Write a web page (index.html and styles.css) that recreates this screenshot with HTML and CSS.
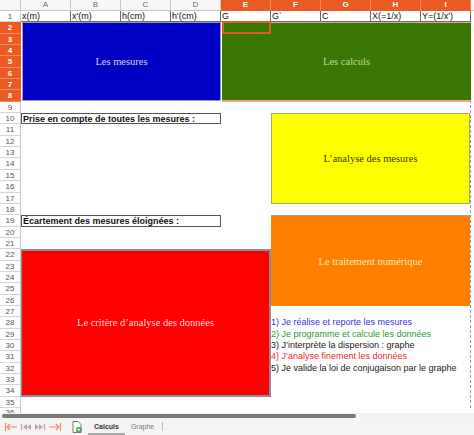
FILE: index.html
```html
<!DOCTYPE html>
<html lang="fr">
<head>
<meta charset="utf-8">
<link rel="stylesheet" href="styles.css">
</head>
<body>
<div class="app">
  <div class="sheet">
    <div class="grid">
      <div class="corner"></div>
      <div class="ch">A</div><div class="ch">B</div><div class="ch">C</div><div class="ch">D</div>
      <div class="ch sel">E</div><div class="ch sel">F</div><div class="ch sel">G</div><div class="ch sel">H</div><div class="ch sel">I</div>
      <div class="ch rest"></div>

      <div class="rh" style="grid-row:2">1</div>
      <div class="rh sel" style="grid-row:3">2</div>
      <div class="rh sel" style="grid-row:4">3</div>
      <div class="rh sel" style="grid-row:5">4</div>
      <div class="rh sel" style="grid-row:6">5</div>
      <div class="rh sel" style="grid-row:7">6</div>
      <div class="rh sel" style="grid-row:8">7</div>
      <div class="rh sel" style="grid-row:9">8</div>
      <div class="rh" style="grid-row:10">9</div>
      <div class="rh" style="grid-row:11">10</div>
      <div class="rh" style="grid-row:12">11</div>
      <div class="rh" style="grid-row:13">12</div>
      <div class="rh" style="grid-row:14">13</div>
      <div class="rh" style="grid-row:15">14</div>
      <div class="rh" style="grid-row:16">15</div>
      <div class="rh" style="grid-row:17">16</div>
      <div class="rh" style="grid-row:18">17</div>
      <div class="rh" style="grid-row:19">18</div>
      <div class="rh" style="grid-row:20">19</div>
      <div class="rh" style="grid-row:21">20</div>
      <div class="rh" style="grid-row:22">21</div>
      <div class="rh" style="grid-row:23">22</div>
      <div class="rh" style="grid-row:24">23</div>
      <div class="rh" style="grid-row:25">24</div>
      <div class="rh" style="grid-row:26">25</div>
      <div class="rh" style="grid-row:27">26</div>
      <div class="rh" style="grid-row:28">27</div>
      <div class="rh" style="grid-row:29">28</div>
      <div class="rh" style="grid-row:30">29</div>
      <div class="rh" style="grid-row:31">30</div>
      <div class="rh" style="grid-row:32">31</div>
      <div class="rh" style="grid-row:33">32</div>
      <div class="rh" style="grid-row:34">33</div>
      <div class="rh" style="grid-row:35">34</div>
      <div class="rh" style="grid-row:36">35</div>
      <div class="rh last" style="grid-row:37">36</div>

      <div class="cell r1 c1">x(m)</div>
      <div class="cell r1 c2">x'(m)</div>
      <div class="cell r1 c3">h(cm)</div>
      <div class="cell r1 c4">h'(cm)</div>
      <div class="cell r1 c5">G</div>
      <div class="cell r1 c6">G`</div>
      <div class="cell r1 c7">C</div>
      <div class="cell r1 c8">X(=1/x)</div>
      <div class="cell r1 c9">Y=(1/x')</div>

      <div class="cell title t10">Prise en compte de toutes les mesures :</div>
      <div class="cell title t19">Écartement des mesures éloignées :</div>

      <div class="cell item i1">1) Je réalise et reporte les mesures</div>
      <div class="cell item i2">2) Je programme et calcule les données</div>
      <div class="cell item i3">3) J’interprète la dispersion : graphe</div>
      <div class="cell item i4">4) J’analyse finement les données</div>
      <div class="cell item i5">5) Je valide la loi de conjugaison par le graphe</div>

      <div class="pagebreak"></div>

      <div class="shape blue">Les mesures</div>
      <div class="shape green">Les calculs</div>
      <div class="cursor"></div>
      <div class="shape yellow">L’analyse des mesures</div>
      <div class="shape orange">Le traitement numérique</div>
      <div class="shape red">Le critère d’analyse des données</div>
    </div>
  </div>
  <div class="hscroll"><div class="thumb"></div></div>
  <div class="tabbar">
    <div class="navs">
      <svg class="nav" width="14" height="10" viewBox="0 0 14 10"><path d="M1.5 1v8M3 5h10M3 5l3-3M3 5l3 3" stroke="#f08a6a" stroke-width="1.2" fill="none"/></svg>
      <svg class="nav" width="12" height="10" viewBox="0 0 12 10"><path d="M1.5 2v6" stroke="#c9a0a0" stroke-width="1.2"/><path d="M7 2L3 5l4 3zM11 2L7 5l4 3z" fill="#c9a0a0"/></svg>
      <svg class="nav" width="12" height="10" viewBox="0 0 12 10"><path d="M10.5 2v6" stroke="#c9a0a0" stroke-width="1.2"/><path d="M1 2l4 3-4 3zM5 2l4 3-4 3z" fill="#c9a0a0"/></svg>
      <svg class="nav" width="14" height="10" viewBox="0 0 14 10"><path d="M12.5 1v8M1 5h10M11 5L8 2M11 5L8 8" stroke="#f08a6a" stroke-width="1.2" fill="none"/></svg>
    </div>
    <svg class="addsheet" width="10" height="12" viewBox="0 0 10 12"><path d="M1 0.5h5l3 3v8H1z" fill="#fff" stroke="#777" stroke-width="1"/><circle cx="6.8" cy="8.8" r="2.8" fill="#3b9b3b"/><path d="M6.8 7.2v3.2M5.2 8.8h3.2" stroke="#fff" stroke-width="1"/></svg>
    <div class="tab active">Calculs</div>
    <div class="tab">Graphe</div>
    <div class="tabsep"></div>
  </div>
</div>
</body>
</html>
```
FILE: styles.css
```css
* { box-sizing: border-box; }
html, body { margin: 0; padding: 0; background: #ffffff; }
body { font-family: "Liberation Sans", Arial, sans-serif; }

.app { width: 474px; height: 435px; overflow: hidden; display: flex; flex-direction: column; }

.sheet { height: 413px; overflow: hidden; flex: none; }

.grid {
  display: grid;
  grid-template-columns: 21px repeat(9, 50px) 1fr;
  grid-template-rows: 11px repeat(36, 11.35px);
}

.corner { grid-row: 1; grid-column: 1; background: #f7f7f7; border-right: 1px solid #c8c8c8; border-bottom: 1px solid #c8c8c8; }

.ch {
  grid-row: 1;
  background: #f7f7f7;
  border-right: 1px solid #c8c8c8;
  border-bottom: 1px solid #c8c8c8;
  color: #6a6a6a;
  font-size: 8px;
  line-height: 10px;
  text-align: center;
}
.ch.sel { background: #ea5a22; color: #ffffff; font-weight: bold; border-right-color: #f08a60; border-bottom-color: #ea5a22; }
.ch.rest { border-right: none; }

.rh {
  grid-column: 1;
  background: #ffffff;
  border-right: 1px solid #c8c8c8;
  border-bottom: 1px solid #d6d6d6;
  color: #555555;
  font-size: 8px;
  line-height: 11px;
  text-align: center;
}
.rh.sel { background: #ea5a22; color: #ffffff; font-weight: bold; border-bottom-color: #f08a60; border-right-color: #ea5a22; }
.rh.last { line-height: 9px; }

.cell {
  font-size: 9px;
  line-height: 11px;
  color: #111111;
  white-space: nowrap;
  padding-left: 1px;
}
.r1 { grid-row: 2; border-right: 1px solid #6a6a6a; border-bottom: 1px solid #6a6a6a; }
.c1 { grid-column: 2; }
.c2 { grid-column: 3; }
.c3 { grid-column: 4; }
.c4 { grid-column: 5; }
.c5 { grid-column: 6; }
.c6 { grid-column: 7; }
.c7 { grid-column: 8; }
.c8 { grid-column: 9; }
.c9 { grid-column: 10; }

.title { grid-column: 2 / 6; font-weight: bold; border: 1px solid #555555; line-height: 10px; }
.t10 { grid-row: 11; }
.t19 { grid-row: 20; }

.item { grid-column: 7 / 12; padding-left: 0; line-height: 11.35px; }
.i1 { grid-row: 29; color: #3535e0; }
.i2 { grid-row: 30; color: #2f9a2f; }
.i3 { grid-row: 31; color: #1a1a1a; }
.i4 { grid-row: 32; color: #ee2a2a; }
.i5 { grid-row: 33; color: #1a1a1a; }

.pagebreak { grid-column: 11; grid-row: 9 / 37; border-left: 1px dashed #8aa0c8; margin-left: -1px; }

.shape {
  display: flex;
  align-items: center;
  justify-content: center;
  font-family: "Liberation Serif", "Times New Roman", serif;
  font-size: 10.5px;
  text-align: center;
}
.blue { grid-row: 3 / 10; grid-column: 2 / 6; margin: 0 0 1px 1px; background: #0000c4; color: #d2d2ff; border: 1px solid #9a9aa8; }
.green { grid-row: 3 / 10; grid-column: 6 / 11; background: #3a7806; color: #b8dc8c; border-top: 1px solid #e9a88c; border-bottom: 2px solid #e9a88c; margin-left: 1px; }
.cursor { grid-row: 3; grid-column: 6; border: 2px solid #e35e1e; margin: -1px 0 0 1px; }
.yellow { grid-row: 11 / 19; grid-column: 7 / 11; background: #ffff00; color: #3a3a10; border: 1px solid #aaa860; margin-right: 1px; }
.orange { grid-row: 20 / 28; grid-column: 7 / 11; background: #ff8000; color: #ffe2b8; border-top: 1px solid #b0a080; margin-right: 1px; }
.red { grid-row: 23 / 36; grid-column: 2 / 7; background: #ff0000; color: #ffdada; border: 2px solid #8c8c9c; border-left-width: 1px; }

.hscroll { height: 5px; background: #f2f2f2; flex: none; display: flex; align-items: center; }
.thumb { width: 354px; height: 4px; margin-left: 2px; background: #7a7a7a; border-radius: 2px; }

.tabbar {
  flex: 1;
  background: #f4f4f4;
  display: flex;
  align-items: center;
  padding-left: 4px;
}
.navs { display: flex; align-items: center; gap: 2px; }
.nav { display: block; }
.addsheet { display: block; margin-left: 10px; }
.tab { font-size: 7px; color: #7a7a7a; padding: 0 6px; height: 17px; line-height: 17px; }
.tab.active { font-weight: bold; color: #333333; margin-left: 6px; border-bottom: 2px solid #a8a8a8; }
.tabsep { width: 1px; height: 9px; background: #bcbcbc; margin-left: 2px; }
```
